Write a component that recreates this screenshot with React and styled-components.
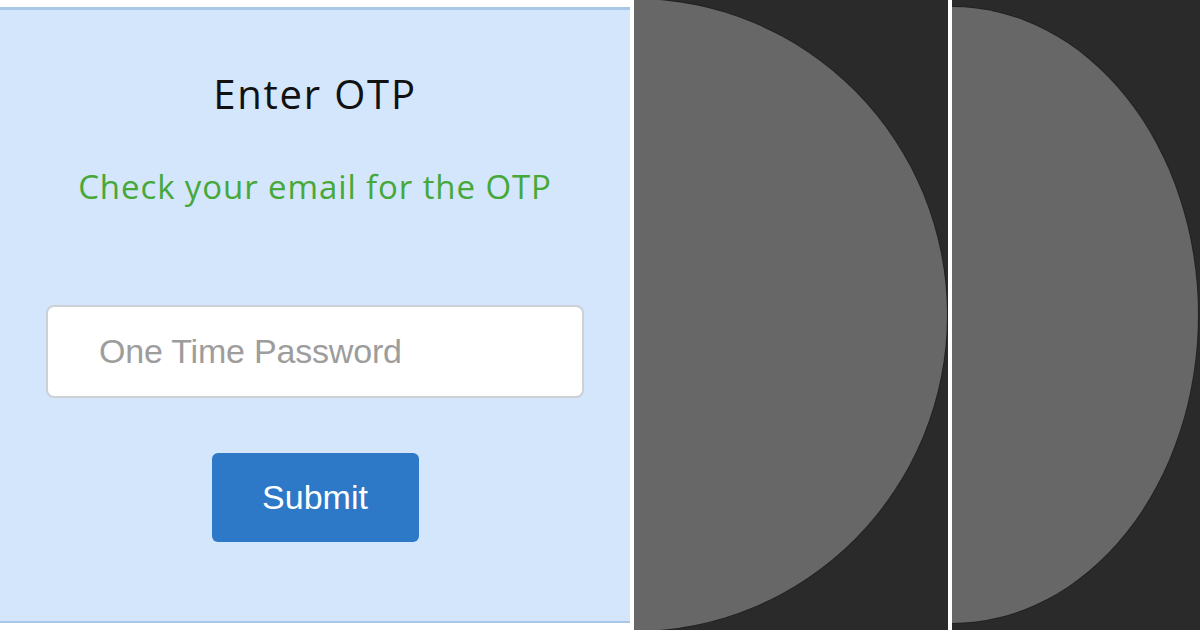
import React from "react";
import styled, { createGlobalStyle } from "styled-components";

const GlobalStyle = createGlobalStyle`
    html, body {
        margin: 0;
        padding: 0;
        background: #ffffff;
    }
    * {
        box-sizing: border-box;
    }
`;

const Page = styled.div`
    display: flex;
    gap: 4px;
    width: 1200px;
    height: 630px;
    overflow: hidden;
    background: #ffffff;
`;

const FormColumn = styled.div`
    width: 630px;
    flex-shrink: 0;
    padding: 7px 0 7px;
`;

const FormCard = styled.div`
    height: 100%;
    background: #d3e6fb;
    border-top: 3px solid #a9c8e9;
    border-bottom: 2px solid #a9c8e9;
    display: flex;
    flex-direction: column;
    align-items: center;
    padding-top: 60px;
`;

const Title = styled.h2`
    margin: 0;
    font-family: "Open Sans", "Noto Sans", sans-serif;
    font-weight: 400;
    font-size: 40px;
    line-height: 48px;
    letter-spacing: 1.8px;
    color: #111111;
`;

const Notice = styled.p`
    margin: 49px 0 0;
    font-family: "Open Sans", "Noto Sans", sans-serif;
    font-size: 33px;
    line-height: 40px;
    letter-spacing: 0.9px;
    color: #46a838;
`;

const OtpInput = styled.input`
    margin-top: 98px;
    width: 538px;
    height: 93px;
    padding: 0 0 0 51px;
    border: 2px solid #cdd0d4;
    border-radius: 8px;
    background: #ffffff;
    font-family: "Liberation Sans", Arial, sans-serif;
    font-size: 34px;
    letter-spacing: -0.2px;
    color: #333333;
    outline: none;

    &::placeholder {
        color: #9d9d9d;
    }
`;

const SubmitButton = styled.button`
    margin-top: 55px;
    width: 207px;
    height: 89px;
    border: none;
    border-radius: 6px;
    background: #2d78c7;
    color: #ffffff;
    font-family: "Liberation Sans", Arial, sans-serif;
    font-size: 34px;
    cursor: pointer;
`;

const ShadePanel = styled.div`
    width: ${(p) => p.$width}px;
    flex-shrink: 0;
    height: 630px;
    background: #2a2a2a;

    svg {
        display: block;
    }
`;

function HalfMoon({ width, rx, ry }) {
    return (
        <ShadePanel $width={width}>
            <svg width={width} height="630" viewBox={`0 0 ${width} 630`}>
                <ellipse cx="0" cy="315" rx={rx + 1} ry={ry + 1} fill="#222222" />
                <ellipse cx="0" cy="315" rx={rx} ry={ry} fill="#676767" />
            </svg>
        </ShadePanel>
    );
}

export default function App() {
    return (
        <>
            <GlobalStyle />
            <Page>
                <FormColumn>
                    <FormCard>
                        <Title>Enter OTP</Title>
                        <Notice>Check your email for the OTP</Notice>
                        <OtpInput type="text" placeholder="One Time Password" />
                        <SubmitButton type="button">Submit</SubmitButton>
                    </FormCard>
                </FormColumn>
                <HalfMoon width={314} rx={313} ry={316} />
                <HalfMoon width={248} rx={246} ry={308} />
            </Page>
        </>
    );
}
